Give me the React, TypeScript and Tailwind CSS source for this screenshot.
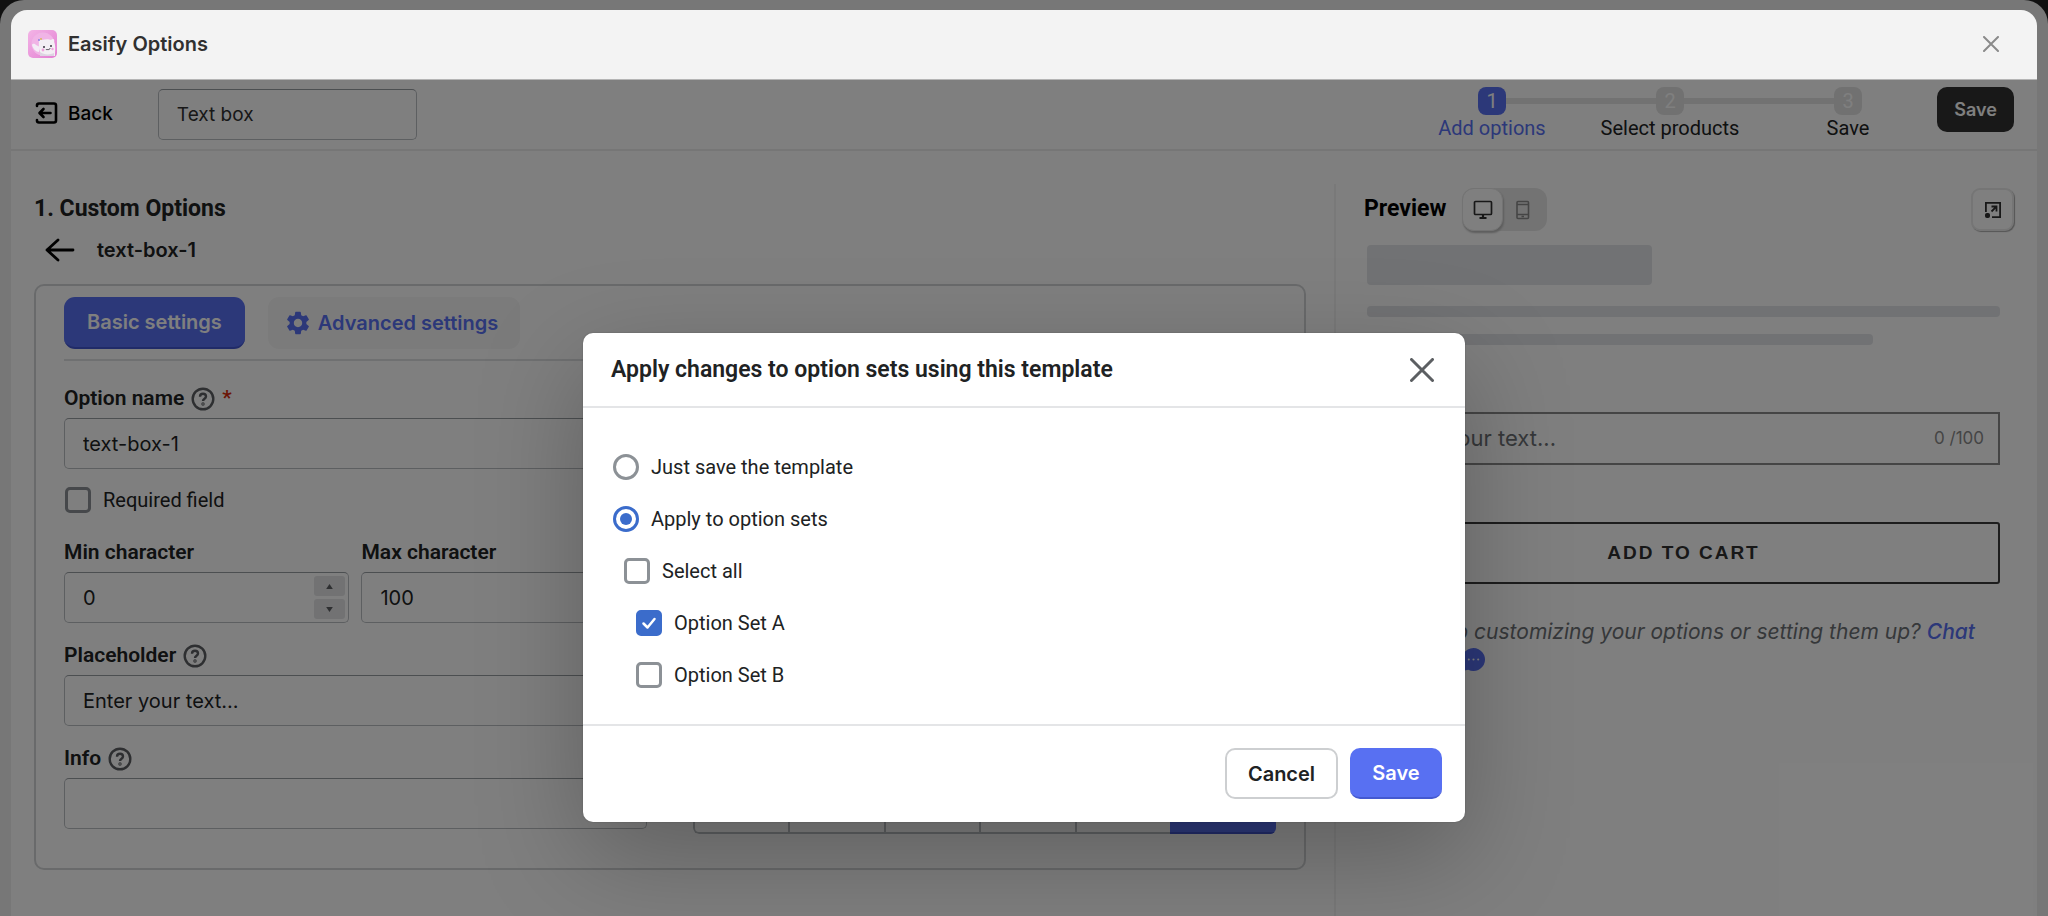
import { useState } from "react";
import type { ReactNode } from "react";
import clsx from "clsx";
import { MdSettings } from "react-icons/md";

const steps = ["Add options", "Select products", "Save"];
const columnWidths = ["1", "2", "3", "4", "5"];

const BearLogo = () => (
  <svg viewBox="0 0 29 28" className="h-7 w-[29px]" aria-hidden="true">
    <defs>
      <linearGradient id="logoBg" x1="0" y1="0" x2="1" y2="1">
        <stop offset="0" stopColor="#f3b4e6" />
        <stop offset="1" stopColor="#e37fd2" />
      </linearGradient>
      <clipPath id="logoClip">
        <rect width="29" height="28" rx="5" />
      </clipPath>
    </defs>
    <g clipPath="url(#logoClip)">
      <rect width="29" height="28" fill="url(#logoBg)" />
      <circle cx="15" cy="14" r="11.500" fill="#f0b4e6" />
      <path d="M4 15c1-2 3-1 4 0l4 2-1 5c-3 0-6-3-7-7z" fill="#f4ecf6" />
      <path d="M11 12c-1-3 1-4 3-2 3-1 7-1 9 0 2-2 4-1 3 2 2 4 1 9 1 14H12c1-5-2-9-1-14z" fill="#f3eff4" />
      <path d="M12 22c4 3 10 3 14 1v3H12z" fill="#ddd5e2" />
      <circle cx="13" cy="9" r="1" fill="#d9b45e" />
      <circle cx="11" cy="10" r="1" fill="#8f7fe0" />
      <circle cx="16" cy="17" r="1" fill="#3a3340" />
      <circle cx="23" cy="16" r="1" fill="#3a3340" />
      <path d="M18 19c0 1 2 1 2 0 0 1 2 1 2-1" fill="none" stroke="#3a3340" strokeWidth="0.8" />
      <circle cx="15" cy="20" r="1.4" fill="#efa3dc" />
      <circle cx="24.500" cy="19" r="1.200" fill="#efa3dc" />
    </g>
  </svg>
);

const CloseIcon = ({ className }: { className: string }) => (
  <svg viewBox="0 0 24 24" className={className} fill="none" stroke="currentColor" strokeLinecap="round" aria-hidden="true">
    <path d="M1.500 1.500l21 21M22.500 1.500l-21 21" />
  </svg>
);

const HelpIcon = () => (
  <svg viewBox="0 0 24 24" className="h-6 w-6 text-[#5c5f62]" fill="none" stroke="currentColor" strokeWidth="2.400" aria-hidden="true">
    <circle cx="12" cy="12" r="10.300" />
    <path d="M9 9.800c0-1.800 1.300-3 3-3s3 1.200 3 2.700c0 2.200-3 2.200-3 4.500" />
    <circle cx="12" cy="17" r="0.500" />
  </svg>
);

const inputClass =
  "h-[51px] w-full rounded-[5px] border border-[#bbbfc3] border-t-[#999ea3] bg-white px-[18px] font-['Inter',sans-serif] text-[20px] text-[#202223] outline-none";

const Field = ({ id, label, help, required, children }: { id: string; label: string; help?: boolean; required?: boolean; children: ReactNode }) => (
  <div className="flex-1">
    <div className="mb-1 flex h-[30px] items-center gap-[7px]">
      <label htmlFor={id} className="text-[21px] font-semibold">
        {label}
      </label>
      {help && <HelpIcon />}
      {required && <span className="text-[21px] font-semibold text-[#d72c0d]">*</span>}
    </div>
    {children}
  </div>
);

const Check = ({ id, label, checked, onChange, className }: { id: string; label: string; checked: boolean; onChange: () => void; className?: string }) => (
  <div className={clsx("flex items-center gap-3", className)}>
    <span className="relative flex h-[26px] w-[26px]">
      <input
        id={id}
        type="checkbox"
        checked={checked}
        onChange={onChange}
        className="h-full w-full appearance-none rounded-[5px] border-[3px] border-[#8c9196] bg-white checked:border-[#3b6ccb] checked:bg-[#3b6ccb]"
      />
      {checked && (
        <svg viewBox="0 0 26 26" className="pointer-events-none absolute inset-0" fill="none" stroke="#fff" strokeWidth="2.500" strokeLinecap="round" strokeLinejoin="round">
          <path d="M7.500 13.500l4 4 7-8.500" />
        </svg>
      )}
    </span>
    <label htmlFor={id} className="text-[20px]">
      {label}
    </label>
  </div>
);

const Radio = ({ id, label, checked, onChange }: { id: string; label: string; checked: boolean; onChange: () => void }) => (
  <div className="flex h-[52px] items-center gap-3">
    <span className="relative flex h-[26px] w-[26px]">
      <input
        id={id}
        type="radio"
        name="apply-mode"
        checked={checked}
        onChange={onChange}
        className="h-full w-full appearance-none rounded-full border-[3px] border-[#8c9196] bg-white checked:border-[#3b6ccb]"
      />
      {checked && <span className="pointer-events-none absolute inset-[7px] rounded-full bg-[#3b6ccb]" />}
    </span>
    <label htmlFor={id} className="text-[20px]">
      {label}
    </label>
  </div>
);

const TopBar = () => (
  <div className="flex h-[71px] items-start border-b-2 border-[#ececec] px-[23px]">
    <button className="mt-[9px] flex h-[51px] items-center gap-[10px] font-['Inter',sans-serif] text-[19px] font-medium text-black">
      <svg viewBox="0 0 24 24" className="mb-[3px] h-6 w-6" fill="none" stroke="currentColor" strokeWidth="2.600" strokeLinecap="round" strokeLinejoin="round">
        <path d="M3 5V4.200Q3 2.500 5 2.500H20q2 0 2 2v15q0 2-2 2H5Q3 21.500 3 19.800v-.8" />
        <path d="M16.500 12H6M9.500 8L5.500 12l4 4" />
      </svg>
      Back
    </button>
    <input
      aria-label="Template name"
      defaultValue="Text box"
      className="ml-[45px] mt-[9px] h-[51px] w-[259px] rounded-[5px] border border-[#bbbfc3] border-t-[#999ea3] bg-white px-[18px] font-['Inter',sans-serif] text-[19px] text-[#303030] outline-none"
    />
    <ol className="ml-auto flex pt-[7px]">
      {steps.map((step, i) => (
        <li key={step} className="flex w-[178px] flex-col items-center">
          <div className="flex w-full items-center">
            <span className={clsx("h-[6px] flex-1", i > 0 && "bg-[#e4e4e4]")} />
            <span className={clsx("flex h-7 w-7 items-center justify-center rounded-lg text-[20px]", i === 0 ? "bg-[#5870f2] text-white" : "bg-[#e2e2e2] text-white")}>
              {i + 1}
            </span>
            <span className={clsx("h-[6px] flex-1", i < 2 && "bg-[#e4e4e4]")} />
          </div>
          <span className={clsx("text-[20px] leading-[26px]", i === 0 ? "text-[#5870f2]" : "text-[#202223]")}>{step}</span>
        </li>
      ))}
    </ol>
    <button className="mt-[7px] h-[45px] w-[77px] rounded-[10px] bg-[#303030] font-['Inter',sans-serif] text-[18px] font-semibold text-white">Save</button>
  </div>
);

const OptionForm = () => {
  const [required, setRequired] = useState(false);

  return (
    <div className="rounded-[10px] border-2 border-[#d3d5d7] px-7 pb-[39px] pt-[11px]">
      <div className="flex items-start gap-[23px] border-b-2 border-[#dfe0e2] pb-[10px]">
        <button className="h-[52px] rounded-[11px] border-b-2 border-[#4357d0] bg-[#5870f2] px-[23px] font-['Inter',sans-serif] text-[20px] font-semibold text-white">
          Basic settings
        </button>
        <button className="flex h-[52px] items-center gap-1.5 rounded-[11px] bg-[#f7f7f7] pl-4 pr-[22px] font-['Inter',sans-serif] text-[20px] font-semibold text-[#5870f2]">
          <MdSettings className="h-7 w-7" />
          Advanced settings
        </button>
      </div>

      <div className="mt-[23px] flex gap-[46px]">
        <div className="flex flex-1 flex-col">
          <Field id="option-name" label="Option name" help required>
            <input id="option-name" defaultValue="text-box-1" className={inputClass} />
          </Field>
          <Check id="required-field" label="Required field" checked={required} onChange={() => setRequired(!required)} className="mb-[25px] mt-[18px] h-[26px] pl-px" />
          <div className="flex gap-3">
            <Field id="min-character" label="Min character">
              <div className="relative">
                <input id="min-character" defaultValue="0" className={inputClass} />
                <div className="absolute inset-y-1 right-1 flex w-[31px] flex-col justify-between">
                  <button aria-label="Increase" className="flex h-5 items-center justify-center rounded-[3px] bg-[#e4e5e7]">
                    <svg viewBox="0 0 8 6" className="h-[5px] w-[7px]" fill="#5c5f62"><path d="M4 0l4 6H0z" /></svg>
                  </button>
                  <button aria-label="Decrease" className="flex h-5 items-center justify-center rounded-[3px] bg-[#e4e5e7]">
                    <svg viewBox="0 0 8 6" className="h-[5px] w-[7px]" fill="#5c5f62"><path d="M4 6l4-6H0z" /></svg>
                  </button>
                </div>
              </div>
            </Field>
            <Field id="max-character" label="Max character">
              <input id="max-character" defaultValue="100" className={inputClass} />
            </Field>
          </div>
          <div className="mt-[18px] flex">
            <Field id="placeholder" label="Placeholder" help>
              <input id="placeholder" defaultValue="Enter your text..." className={inputClass} />
            </Field>
          </div>
          <div className="mt-[18px] flex">
            <Field id="info" label="Info" help>
              <input id="info" className={inputClass} />
            </Field>
          </div>
        </div>

        {/* column width picker */}
        <div className="flex flex-1 items-end">
          <div className="-mb-[5px] flex h-[51px] w-full overflow-hidden rounded-[6px]">
            {columnWidths.map((c, i) => (
              <button
                key={c}
                aria-label={`Column width ${c}`}
                className={clsx("flex-1 border-y-2 border-l-2 border-[#bbbfc3]", i === 0 && "rounded-l-[6px]")}
              />
            ))}
            <button aria-label="Full width" className="w-[106px] border-b-2 border-[#4357d0] bg-[#5870f2]" />
          </div>
        </div>
      </div>
    </div>
  );
};

const Preview = () => (
  <section className="mt-[33px] min-w-0 flex-1 border-l-2 border-[#f3f3f3] pl-7 pr-[23px]">
    <div className="flex items-center pt-1">
      <h2 className="text-[23px] font-bold text-black">Preview</h2>
      <div className="ml-4 flex h-[43px] w-[85px] rounded-xl bg-[#e7e7e7]">
        <button aria-label="Desktop" className="flex w-[41px] items-center justify-center rounded-xl border border-[#e7e7e7] bg-white shadow-[1px_2px_2px_#bbb]">
          <svg viewBox="0 0 20 20" className="h-5 w-5" fill="none" stroke="#303030" strokeWidth="1.700">
            <rect x="1.500" y="1.500" width="17" height="13" rx="1" />
            <path d="M10 14.500v3.500M6.500 18h7" strokeWidth="2.200" />
          </svg>
        </button>
        <button aria-label="Mobile" className="flex flex-1 items-center justify-center pr-1">
          <svg viewBox="0 0 20 20" className="h-5 w-5" fill="none" stroke="#8a8a8a" strokeWidth="1.600">
            <rect x="4" y="1.500" width="11.500" height="17" rx="1" />
            <path d="M4 4.500h11.500M4 14.500h11.500M8.500 16.500h2.500" />
          </svg>
        </button>
      </div>
      <button aria-label="Expand preview" className="ml-auto flex h-[43px] w-[43px] items-center justify-center rounded-[9px] border-2 border-[#ebebeb] bg-white shadow-[1px_1px_1px_#aaa]">
        <svg viewBox="0 0 18 18" className="h-[18px] w-[18px]" fill="none" stroke="#303030" strokeWidth="1.800">
          <path d="M1.900 11V1.900h14.200v14.200H8" />
          <path d="M7.500 5.500h5v5M12.300 5.700L7.500 10.500" />
          <rect x="1.500" y="12.500" width="4" height="4" rx="1" fill="#303030" strokeWidth="1" />
        </svg>
      </button>
    </div>

    <div className="ml-[3px] mr-[14px] mt-[14px]">
      <div className="h-10 w-[45%] rounded bg-[#e3e5e8]" />
      <div className="mt-[21px] h-[11px] rounded-[4px] bg-[#e3e5e8]" />
      <div className="mt-[17px] h-[11px] w-4/5 rounded-[4px] bg-[#e3e5e8]" />
      <div className="mt-[67px] flex h-[53px] items-center border-2 border-[#8a8a8a] pl-4 pr-[14px]">
        <input aria-label="Text" placeholder="Enter your text..." className="min-w-0 flex-1 bg-transparent font-['Inter',sans-serif] text-[22px] outline-none placeholder:text-[#6d7175]" />
        <span className="font-['Inter',sans-serif] text-[17px] text-[#8a8a8a]">0 /100</span>
      </div>
      <button className="mt-[57px] h-[62px] w-full rounded-[3px] border-2 border-[#3a3a3a] font-['Liberation_Sans',sans-serif] text-[19px] font-bold tracking-[2px] text-[#303030]">
        ADD TO CART
      </button>
      <p className="mt-[34px] font-['Inter',sans-serif] text-[21px] italic leading-7 text-[#6d7175]">
        Need help customizing your options or setting them up?{" "}
        <a href="#chat" className="font-medium text-[#5870f2]">
          Chat with us
          <svg viewBox="0 0 22 22" className="-mt-1 ml-[23px] inline h-[23px] w-[23px]" fill="#5870f2" aria-hidden="true">
            <path d="M11 0a11 11 0 1 1-5 20.800L0 22l1.500-5.500A11 11 0 0 1 11 0z" />
            <g fill="#fff">
              <circle cx="6.500" cy="11" r="1" />
              <circle cx="11" cy="11" r="1" />
              <circle cx="15.500" cy="11" r="1" />
            </g>
          </svg>
        </a>
      </p>
    </div>
  </section>
);

const ApplyModal = () => {
  const [mode, setMode] = useState("sets");
  const [sets, setSets] = useState({ a: true, b: false });
  const all = sets.a && sets.b;

  return (
    <div role="dialog" aria-labelledby="modal-title" className="w-[882px] rounded-[10px] bg-white shadow-[0_34px_104px_rgba(0,0,0,0.25),0_0_2px_rgba(0,0,0,0.2)]">
      <div className="flex h-[75px] items-center justify-between border-b-2 border-[#e4e5e7] pl-7 pr-[31px]">
        <h2 id="modal-title" className="pt-[2px] text-[23px] font-semibold">
          Apply changes to option sets using this template
        </h2>
        <button aria-label="Close dialog" className="text-[#5c5f62]">
          <CloseIcon className="h-6 w-6 stroke-[3]" />
        </button>
      </div>
      <div className="px-[30px] pb-[23px] pt-[33px]">
        <Radio id="just-save" label="Just save the template" checked={mode === "save"} onChange={() => setMode("save")} />
        <Radio id="apply-sets" label="Apply to option sets" checked={mode === "sets"} onChange={() => setMode("sets")} />
        <Check id="select-all" label="Select all" checked={all} onChange={() => setSets({ a: !all, b: !all })} className="h-[52px] pl-[11px]" />
        <Check id="set-a" label="Option Set A" checked={sets.a} onChange={() => setSets({ ...sets, a: !sets.a })} className="h-[52px] pl-[23px]" />
        <Check id="set-b" label="Option Set B" checked={sets.b} onChange={() => setSets({ ...sets, b: !sets.b })} className="h-[52px] pl-[23px]" />
      </div>
      <div className="flex justify-end gap-3 border-t-2 border-[#e4e5e7] px-[23px] pb-[23px] pt-[22px] font-['Inter',sans-serif] text-[20px] font-semibold">
        <button className="h-[51px] w-[113px] rounded-[10px] border-2 border-[#cdcfd1] bg-white">Cancel</button>
        <button className="h-[51px] w-[92px] rounded-[10px] border-b-2 border-[#4459d0] bg-[#5870f2] text-white">Save</button>
      </div>
    </div>
  );
};

export default function App() {
  return (
    <div className="min-h-screen bg-[#111] font-['Roboto',sans-serif] text-[#202223]">
      <div className="flex min-h-screen flex-col rounded-t-[24px] bg-[#777] px-[11px] pt-[10px]">
        <header className="flex h-[70px] items-center justify-between rounded-t-[16px] border-b border-[#b5b5b5] bg-[#f3f3f3] pb-0.5 pl-[17px] pr-[38px]">
          <div className="flex items-center gap-[11px]">
            <BearLogo />
            <h1 className="font-['Inter',sans-serif] text-[20px] font-semibold text-[#303030]">Easify Options</h1>
          </div>
          <button aria-label="Close" className="text-[#8a8a8a]">
            <CloseIcon className="h-4 w-4 stroke-[3]" />
          </button>
        </header>

        <div className="relative flex flex-1 flex-col overflow-hidden bg-white">
          <TopBar />
          <main className="flex flex-1 pl-[23px]">
            <section className="w-[64.9%] pb-[30px] pr-7 pt-[44px]">
              <h2 className="text-[23px] font-bold leading-7">1. Custom Options</h2>
              <div className="mb-5 mt-[13px] flex h-7 items-center gap-[21px] pl-[10px]">
                <button aria-label="Back to options" className="text-black">
                  <svg viewBox="0 0 32 28" className="h-7 w-8" fill="none" stroke="currentColor" strokeWidth="2.800" strokeLinecap="round" strokeLinejoin="round">
                    <path d="M29 14H3M14 4L3 14l11 10" />
                  </svg>
                </button>
                <h3 className="font-['Inter',sans-serif] text-[20px] font-semibold">text-box-1</h3>
              </div>
              <OptionForm />
            </section>
            <Preview />
          </main>

          <div className="absolute inset-0 flex items-start justify-center bg-black/50 pt-[253px]">
            <ApplyModal />
          </div>
        </div>
      </div>
    </div>
  );
}
